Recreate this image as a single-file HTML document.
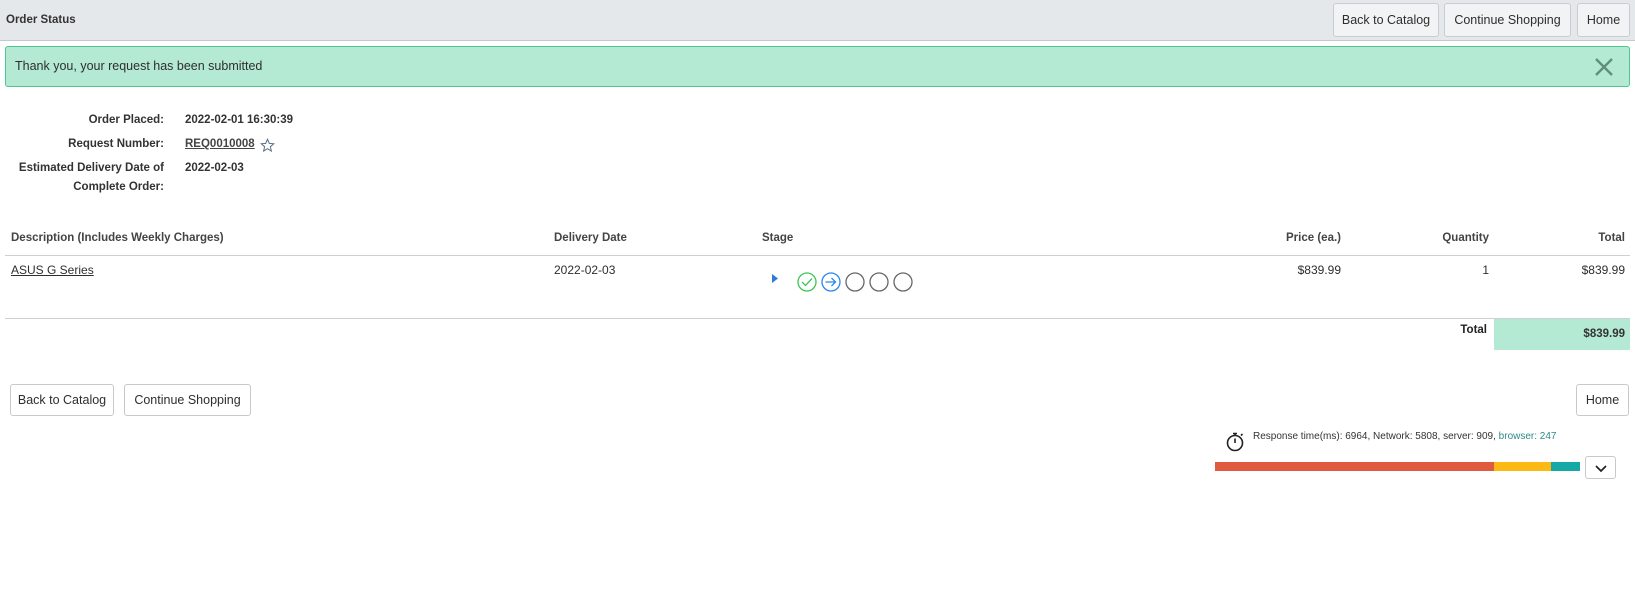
<!DOCTYPE html>
<html><head><meta charset="utf-8"><style>
*{box-sizing:border-box;margin:0;padding:0}
body{width:1635px;height:613px;background:#fff;font-family:"Liberation Sans",sans-serif;font-size:12px;color:#2e2e2e;position:relative;overflow:hidden}
.a{position:absolute;white-space:nowrap}
.hdr{position:absolute;left:0;top:0;width:1635px;height:41px;background:#e5e8eb;border-bottom:1px solid #c8c8c8}
.btn{position:absolute;border:1px solid #c9cdd1;border-radius:3px;background:#f2f3f4;display:flex;align-items:center;justify-content:center;font-size:12.5px;color:#2e2e2e}
.wb{background:#fff;border-color:#c9c9c9}
.r{text-align:right}
.b{font-weight:bold;color:#333;font-size:11.5px}
a{color:#2e2e2e;text-decoration:underline}
</style></head><body>
<div class="hdr"></div>
<div class="a b" style="left:6px;top:14px;font-size:11.5px">Order Status</div>
<div class="btn" style="left:1333px;top:3px;width:106px;height:34px">Back to Catalog</div>
<div class="btn" style="left:1444px;top:3px;width:127px;height:34px">Continue Shopping</div>
<div class="btn" style="left:1577px;top:3px;width:53px;height:34px">Home</div>

<div class="a" style="left:5px;top:46px;width:1625px;height:41px;background:#b4ead4;border:1px solid #4fc68e;border-radius:3px"></div>
<div class="a" style="left:15px;top:59px;font-size:12.5px">Thank you, your request has been submitted</div>
<svg class="a" style="left:1594px;top:57px" width="20" height="20" viewBox="0 0 20 20"><path d="M2 2L18 18M18 2L2 18" stroke="#5f8f7a" stroke-width="2.4"/></svg>

<div class="a b r" style="left:0;width:164px;top:114px">Order Placed:</div>
<div class="a b" style="left:185px;top:114px">2022-02-01 16:30:39</div>
<div class="a b r" style="left:0;width:164px;top:138px">Request Number:</div>
<div class="a b" style="left:185px;top:138px"><a style="color:#444">REQ0010008</a></div>
<svg class="a" style="left:260px;top:138px" width="15" height="15" viewBox="0 0 24 24"><path d="M12 2l2.9 6.6 7.1.6-5.4 4.7 1.6 7-6.2-3.7-6.2 3.7 1.6-7L2 9.2l7.1-.6z" fill="none" stroke="#5a6f85" stroke-width="1.6"/></svg>
<div class="a b r" style="left:0;width:164px;top:162px">Estimated Delivery Date of</div>
<div class="a b r" style="left:0;width:164px;top:181px">Complete Order:</div>
<div class="a b" style="left:185px;top:162px">2022-02-03</div>

<div class="a b" style="left:11px;top:232px;color:#444">Description (Includes Weekly Charges)</div>
<div class="a b" style="left:554px;top:232px;color:#444">Delivery Date</div>
<div class="a b" style="left:762px;top:232px;color:#444">Stage</div>
<div class="a b r" style="left:1200px;width:141px;top:232px;color:#444">Price (ea.)</div>
<div class="a b r" style="left:1350px;width:139px;top:232px;color:#444">Quantity</div>
<div class="a b r" style="left:1500px;width:125px;top:232px;color:#444">Total</div>
<div class="a" style="left:5px;top:255px;width:1625px;height:1px;background:#cfcfcf"></div>
<div class="a" style="left:11px;top:263px"><a>ASUS G Series</a></div>
<div class="a" style="left:554px;top:263px">2022-02-03</div>
<svg class="a" style="left:770px;top:270px" width="150" height="24" viewBox="0 0 150 24">
<path d="M2 4l6 4.5-6 4.5z" fill="#2b7bd8"/>
<circle cx="37" cy="12" r="9" fill="none" stroke="#3cc654" stroke-width="1.3"/>
<path d="M32 12l3.5 3.5L42 8.5" fill="none" stroke="#3cc654" stroke-width="1.3"/>
<circle cx="61" cy="12" r="9" fill="none" stroke="#2b86f0" stroke-width="1.3"/>
<path d="M55.5 12h10M61.5 8l4 4-4 4" fill="none" stroke="#2b86f0" stroke-width="1.3"/>
<circle cx="85" cy="12" r="9" fill="none" stroke="#666" stroke-width="1.3"/>
<circle cx="109" cy="12" r="9" fill="none" stroke="#666" stroke-width="1.3"/>
<circle cx="133" cy="12" r="9" fill="none" stroke="#666" stroke-width="1.3"/>
</svg>
<div class="a r" style="left:1200px;width:141px;top:263px">$839.99</div>
<div class="a r" style="left:1350px;width:139px;top:263px">1</div>
<div class="a r" style="left:1500px;width:125px;top:263px">$839.99</div>
<div class="a" style="left:5px;top:318px;width:1625px;height:1px;background:#cfcfcf"></div>
<div class="a b r" style="left:1350px;width:137px;top:324px;color:#222">Total</div>
<div class="a" style="left:1494px;top:319px;width:136px;height:31px;background:#b4ead4"></div>
<div class="a b r" style="left:1500px;width:125px;top:328px">$839.99</div>

<div class="btn wb" style="left:10px;top:384px;width:104px;height:32px">Back to Catalog</div>
<div class="btn wb" style="left:124px;top:384px;width:127px;height:32px">Continue Shopping</div>
<div class="btn wb" style="left:1576px;top:384px;width:53px;height:32px">Home</div>

<svg class="a" style="left:1224px;top:430px" width="22" height="22" viewBox="0 0 22 22"><circle cx="11" cy="13" r="7.5" fill="none" stroke="#222" stroke-width="1.6"/><path d="M11 13V8.5M9 3.5h4M11 3.5v2M17 5.5l1.5-1.5" stroke="#222" stroke-width="1.6" fill="none"/></svg>
<div class="a" style="left:1253px;top:431px;font-size:10px;color:#333">Response time(ms): 6964, Network: 5808, server: 909, <span style="color:#2f8a8a">browser: 247</span></div>
<div class="a" style="left:1215px;top:462px;width:279px;height:9px;background:#e05a40"></div>
<div class="a" style="left:1494px;top:462px;width:57px;height:9px;background:#fcb813"></div>
<div class="a" style="left:1551px;top:462px;width:29px;height:9px;background:#14a9a6"></div>
<div class="btn wb" style="left:1585px;top:456px;width:31px;height:23px"><svg width="14" height="10" viewBox="0 0 14 10"><path d="M2 3l5 5 5-5" fill="none" stroke="#222" stroke-width="1.7"/></svg></div>
</body></html>
